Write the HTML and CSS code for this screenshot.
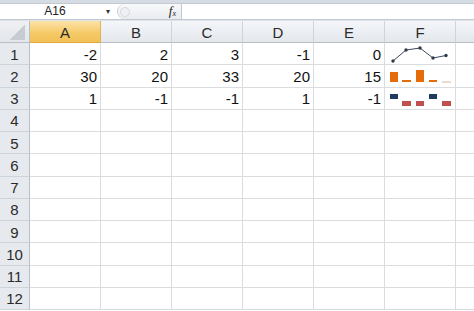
FILE: index.html
```html
<!DOCTYPE html>
<html>
<head>
<meta charset="utf-8">
<link rel="stylesheet" href="styles.css">
</head>
<body>
<div class="topstrip"></div>
<div class="fbar">
  <div class="namebox">A16</div>
  <div class="nbarrow">&#9662;</div>
  <div class="pill">
    <span class="circ"></span>
    <span class="fx">f<sub>x</sub></span>
  </div>
  <div class="finput"></div>
</div>
<div class="gap"></div>
<div class="sheet">
  <div class="hd corner"></div>
  <div class="hd col sel">A</div>
  <div class="hd col">B</div>
  <div class="hd col">C</div>
  <div class="hd col">D</div>
  <div class="hd col">E</div>
  <div class="hd col">F</div>
  <div class="hd col last"></div>

  <div class="rh">1</div>
  <div class="c">-2</div><div class="c">2</div><div class="c">3</div><div class="c">-1</div><div class="c">0</div>
  <div class="c sp"><svg width="70" height="22" viewBox="0 0 70 22"><polyline points="8,18 21,7 35,5 48,15 61,12.5" fill="none" stroke="#3c4a5c" stroke-width="1"/><g fill="#2e3b4c"><circle cx="8" cy="18" r="1.7"/><circle cx="21" cy="7" r="1.7"/><circle cx="35" cy="5" r="1.7"/><circle cx="48" cy="15" r="1.7"/><circle cx="61" cy="12.5" r="1.7"/></g></svg></div>
  <div class="c last"></div>

  <div class="rh">2</div>
  <div class="c">30</div><div class="c">20</div><div class="c">33</div><div class="c">20</div><div class="c">15</div>
  <div class="c sp"><svg width="70" height="22" viewBox="0 0 70 22"><g fill="#e46c0a"><rect x="5" y="7" width="8" height="10"/><rect x="17" y="15" width="9" height="2"/><rect x="31" y="5" width="8" height="12"/><rect x="44" y="15" width="8" height="2"/></g><rect x="57" y="16.5" width="9" height="1" fill="#d8b99c"/></svg></div>
  <div class="c last"></div>

  <div class="rh">3</div>
  <div class="c">1</div><div class="c">-1</div><div class="c">-1</div><div class="c">1</div><div class="c">-1</div>
  <div class="c sp"><svg width="70" height="22" viewBox="0 0 70 22"><rect x="5" y="6" width="8" height="5" fill="#1f3b5e"/><rect x="17" y="13" width="9" height="5" fill="#c0504d"/><rect x="31" y="13" width="8" height="5" fill="#c0504d"/><rect x="44" y="6" width="8" height="5" fill="#1f3b5e"/><rect x="57" y="13" width="9" height="5" fill="#c0504d"/></svg></div>
  <div class="c last"></div>

  <div class="rh">4</div><div class="c"></div><div class="c"></div><div class="c"></div><div class="c"></div><div class="c"></div><div class="c"></div><div class="c last"></div>
  <div class="rh">5</div><div class="c"></div><div class="c"></div><div class="c"></div><div class="c"></div><div class="c"></div><div class="c"></div><div class="c last"></div>
  <div class="rh">6</div><div class="c"></div><div class="c"></div><div class="c"></div><div class="c"></div><div class="c"></div><div class="c"></div><div class="c last"></div>
  <div class="rh">7</div><div class="c"></div><div class="c"></div><div class="c"></div><div class="c"></div><div class="c"></div><div class="c"></div><div class="c last"></div>
  <div class="rh">8</div><div class="c"></div><div class="c"></div><div class="c"></div><div class="c"></div><div class="c"></div><div class="c"></div><div class="c last"></div>
  <div class="rh">9</div><div class="c"></div><div class="c"></div><div class="c"></div><div class="c"></div><div class="c"></div><div class="c"></div><div class="c last"></div>
  <div class="rh">10</div><div class="c"></div><div class="c"></div><div class="c"></div><div class="c"></div><div class="c"></div><div class="c"></div><div class="c last"></div>
  <div class="rh">11</div><div class="c"></div><div class="c"></div><div class="c"></div><div class="c"></div><div class="c"></div><div class="c"></div><div class="c last"></div>
  <div class="rh">12</div><div class="c"></div><div class="c"></div><div class="c"></div><div class="c"></div><div class="c"></div><div class="c"></div><div class="c last"></div>
</div>
</body>
</html>
```
FILE: styles.css
```css
* { box-sizing: border-box; }
html, body { margin: 0; padding: 0; background: #ffffff; overflow: hidden; }
body {
  width: 474px;
  height: 311px;
  font-family: "Liberation Sans", Arial, sans-serif;
  color: #1a1a1a;
}
.topstrip { height: 3px; background: #d6dce4; }
.fbar {
  height: 17px;
  display: flex;
  align-items: stretch;
  background: #ffffff;
  border-top: 1px solid #c3c9d1;
  border-bottom: 1px solid #c3c9d1;
}
.namebox {
  width: 106px;
  font-size: 12px;
  line-height: 15px;
  text-align: center;
  color: #222;
  padding-left: 4px;
}
.nbarrow {
  width: 11px;
  font-size: 8px;
  line-height: 15px;
  color: #333;
}
.pill {
  width: 64px;
  height: 15px;
  display: flex;
  align-items: center;
  justify-content: space-between;
  padding: 0 5px 0 2px;
  background: linear-gradient(#f8f9fb, #e9ecf0);
  border-left: 1px solid #c9ced6;
  border-radius: 8px 0 0 8px;
}
.circ {
  width: 10px; height: 10px;
  border-radius: 50%;
  border: 1px solid #d5d9de;
  background: #eef0f3;
}
.fx {
  font-family: "Liberation Serif", serif;
  font-style: italic;
  font-size: 13px;
  color: #222;
  line-height: 11px;
}
.fx sub { font-size: 8px; vertical-align: -1px; }
.finput { flex: 1; border-left: 1px solid #c3c9d1; }
.gap { height: 1px; background: #dfe3e8; }

.sheet {
  display: grid;
  grid-template-columns: 30px repeat(6, 71px) 1fr;
  grid-template-rows: 22px repeat(12, 22.25px);
}
.hd {
  background: linear-gradient(#f4f6f9, #e3e7ec);
  border-right: 1px solid #cfd4da;
  border-bottom: 1px solid #b9bfc7;
  font-size: 15px;
  color: #2b2b2b;
  display: flex;
  align-items: center;
  justify-content: center;
  padding-top: 1px;
}
.corner {
  background:
    linear-gradient(135deg, transparent 52%, #c7ccd3 52%) no-repeat 9px 3px / 16px 16px,
    linear-gradient(#eef0f3, #e3e6ea);
  border-right: 1px solid #b9bfc7;
}
.sel {
  background: linear-gradient(#fbe3a8, #f5c965 60%, #f2c058);
  border-bottom: 1px solid #e1a93c;
  border-right: 1px solid #e1b458;
}
.hd.last { border-right: none; }
.rh {
  background: #e6e9ee;
  border-right: 1px solid #b9bfc7;
  border-bottom: 1px solid #cfd4da;
  font-size: 15px;
  color: #2b2b2b;
  display: flex;
  align-items: center;
  justify-content: center;
  padding-top: 1px;
}
.c {
  border-right: 1px solid #dadcdf;
  border-bottom: 1px solid #dadcdf;
  font-size: 15px;
  color: #111;
  display: flex;
  align-items: center;
  justify-content: flex-end;
  padding: 1px 3px 0 0;
}
.c.last { border-right: none; }
.c.sp { padding: 0; justify-content: flex-start; align-items: stretch; }
.c.sp svg { display: block; }
```
